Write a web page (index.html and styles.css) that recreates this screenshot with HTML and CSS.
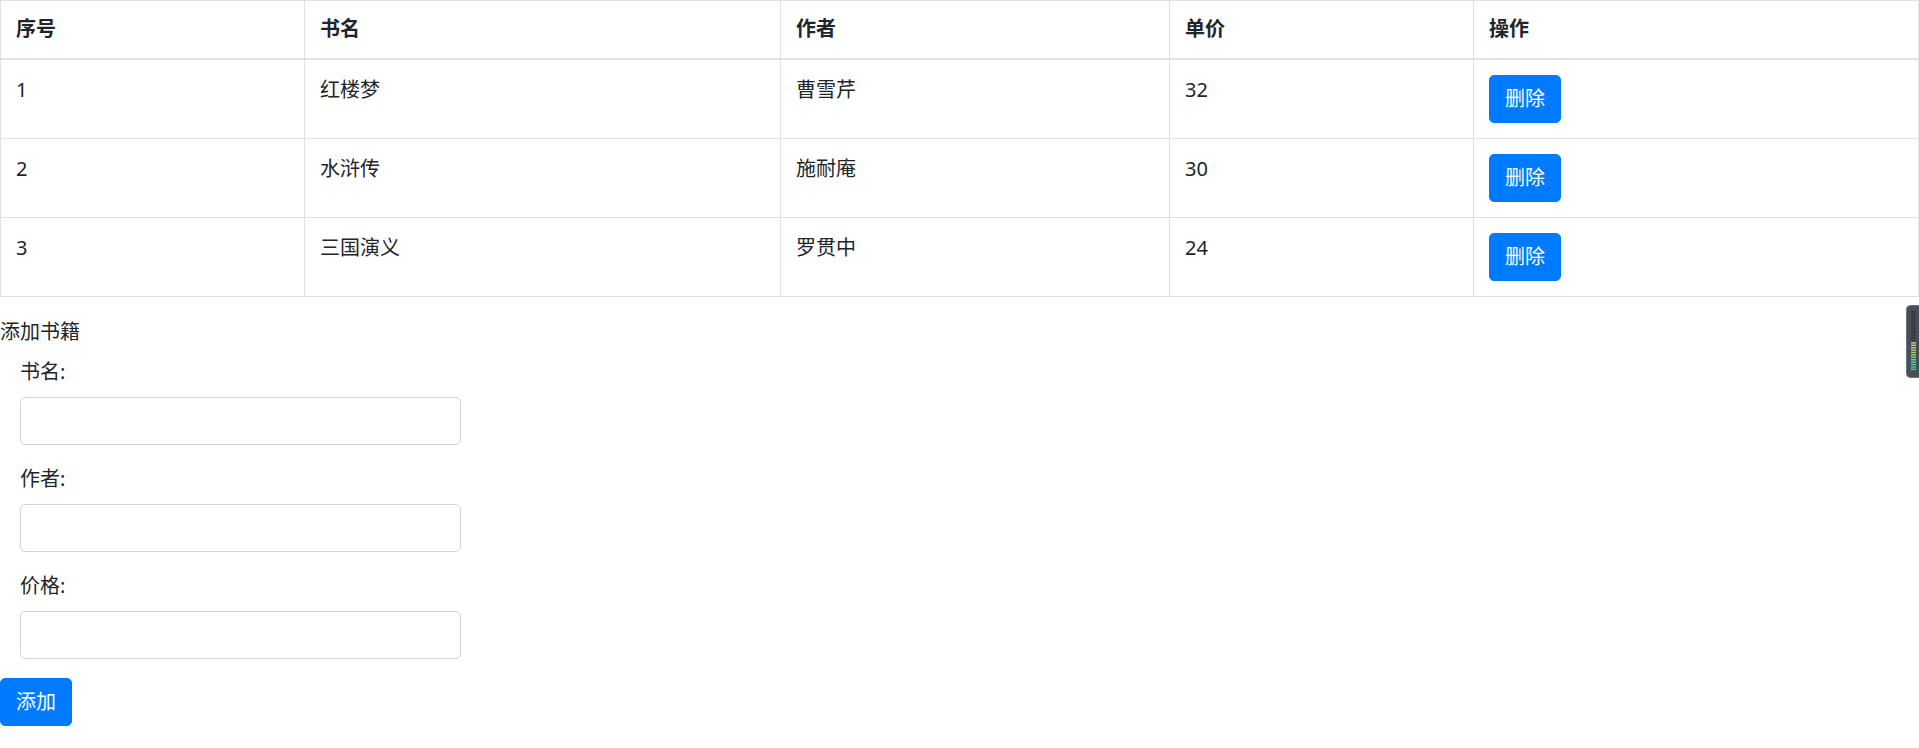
FILE: index.html
```html
<!DOCTYPE html>
<html lang="zh-CN">
<head>
<meta charset="utf-8">
<title>书籍管理</title>
<link rel="stylesheet" href="styles.css">
</head>
<body>
<table class="book-table">
  <colgroup>
    <col class="c-id">
    <col class="c-name">
    <col class="c-author">
    <col class="c-price">
    <col class="c-op">
  </colgroup>
  <thead>
    <tr><th>序号</th><th>书名</th><th>作者</th><th>单价</th><th>操作</th></tr>
  </thead>
  <tbody>
    <tr><td>1</td><td>红楼梦</td><td>曹雪芹</td><td>32</td><td><button class="btn">删除</button></td></tr>
    <tr><td>2</td><td>水浒传</td><td>施耐庵</td><td>30</td><td><button class="btn">删除</button></td></tr>
    <tr><td>3</td><td>三国演义</td><td>罗贯中</td><td>24</td><td><button class="btn">删除</button></td></tr>
  </tbody>
</table>
<div class="add-title">添加书籍</div>
<form class="book-form">
  <div class="field">
    <label>书名:</label>
    <input class="input" type="text">
  </div>
  <div class="field">
    <label>作者:</label>
    <input class="input" type="text">
  </div>
  <div class="field">
    <label>价格:</label>
    <input class="input" type="text">
  </div>
  <button type="button" class="btn">添加</button>
</form>
<div class="meter">
  <svg width="13" height="73" viewBox="0 0 13 73">
    <rect x="0.5" y="0.5" width="16" height="72" rx="4" fill="#4a4e58" stroke="#6c717c"/>
    <g fill="#32353c">
      <rect x="5" y="6" width="5" height="1.4"/><rect x="5" y="8.4" width="5" height="1.4"/>
      <rect x="5" y="10.8" width="5" height="1.4"/><rect x="5" y="13.2" width="5" height="1.4"/>
      <rect x="5" y="15.6" width="5" height="1.4"/><rect x="5" y="18" width="5" height="1.4"/>
      <rect x="5" y="20.4" width="5" height="1.4"/><rect x="5" y="22.8" width="5" height="1.4"/>
      <rect x="5" y="25.2" width="5" height="1.4"/><rect x="5" y="27.6" width="5" height="1.4"/>
      <rect x="5" y="30" width="5" height="1.4"/><rect x="5" y="32.4" width="5" height="1.4"/>
      <rect x="5" y="34.8" width="5" height="1.4"/>
    </g>
    <rect x="5" y="37.2" width="5" height="1.4" fill="#d8d24a"/>
    <rect x="5" y="39.6" width="5" height="1.4" fill="#d3d44c"/>
    <rect x="5" y="42" width="5" height="1.4" fill="#c6d550"/>
    <rect x="5" y="44.4" width="5" height="1.4" fill="#b6d655"/>
    <rect x="5" y="46.8" width="5" height="1.4" fill="#a5d65b"/>
    <rect x="5" y="49.2" width="5" height="1.4" fill="#94d762"/>
    <rect x="5" y="51.6" width="5" height="1.4" fill="#82d76b"/>
    <rect x="5" y="54" width="5" height="1.4" fill="#70d775"/>
    <rect x="5" y="56.4" width="5" height="1.4" fill="#5fd680"/>
    <rect x="5" y="58.8" width="5" height="1.4" fill="#52d48b"/>
    <rect x="5" y="61.2" width="5" height="1.4" fill="#47d197"/>
    <rect x="5" y="63.6" width="5" height="1.4" fill="#3fcda2"/>
  </svg>
</div>
</body>
</html>
```

FILE: styles.css
```css
html, body {
  margin: 0;
  padding: 0;
  background: #fff;
}

body {
  font-family: "Noto Sans", "Noto Sans CJK SC", sans-serif;
  font-size: 20px;
  line-height: 30px;
  color: #212529;
}

.book-table {
  width: 100%;
  border-collapse: collapse;
  table-layout: fixed;
  margin-bottom: 20px;
  border: 1px solid #dee2e6;
}

.c-id { width: 304px; }
.c-name { width: 476px; }
.c-author { width: 389px; }
.c-price { width: 304px; }

.book-table th,
.book-table td {
  border: 1px solid #dee2e6;
  text-align: left;
  vertical-align: top;
  padding: 15px;
}

.book-table th {
  font-weight: 700;
  padding: 13px 15px 14px;
  border-bottom: 2px solid #dee2e6;
}

.btn {
  display: inline-block;
  font-family: inherit;
  font-size: 20px;
  line-height: 30px;
  padding: 8px 15px;
  color: #fff;
  background: #007bff;
  border: 1px solid #007bff;
  border-radius: 5px;
  cursor: pointer;
}

.add-title {
  line-height: 30px;
}

.book-form {
  margin: 10px 0 0;
}

.field {
  padding-left: 20px;
  margin-bottom: 19px;
}

.field label {
  display: block;
  margin-bottom: 10px;
}

.input {
  display: block;
  box-sizing: border-box;
  width: 441px;
  height: 48px;
  padding: 7px 15px;
  font-family: inherit;
  font-size: 20px;
  border: 1px solid #ced4da;
  border-radius: 5px;
  background: #fff;
}

.meter {
  position: fixed;
  top: 305px;
  right: 0;
  width: 13px;
  height: 73px;
  line-height: 0;
}
```
